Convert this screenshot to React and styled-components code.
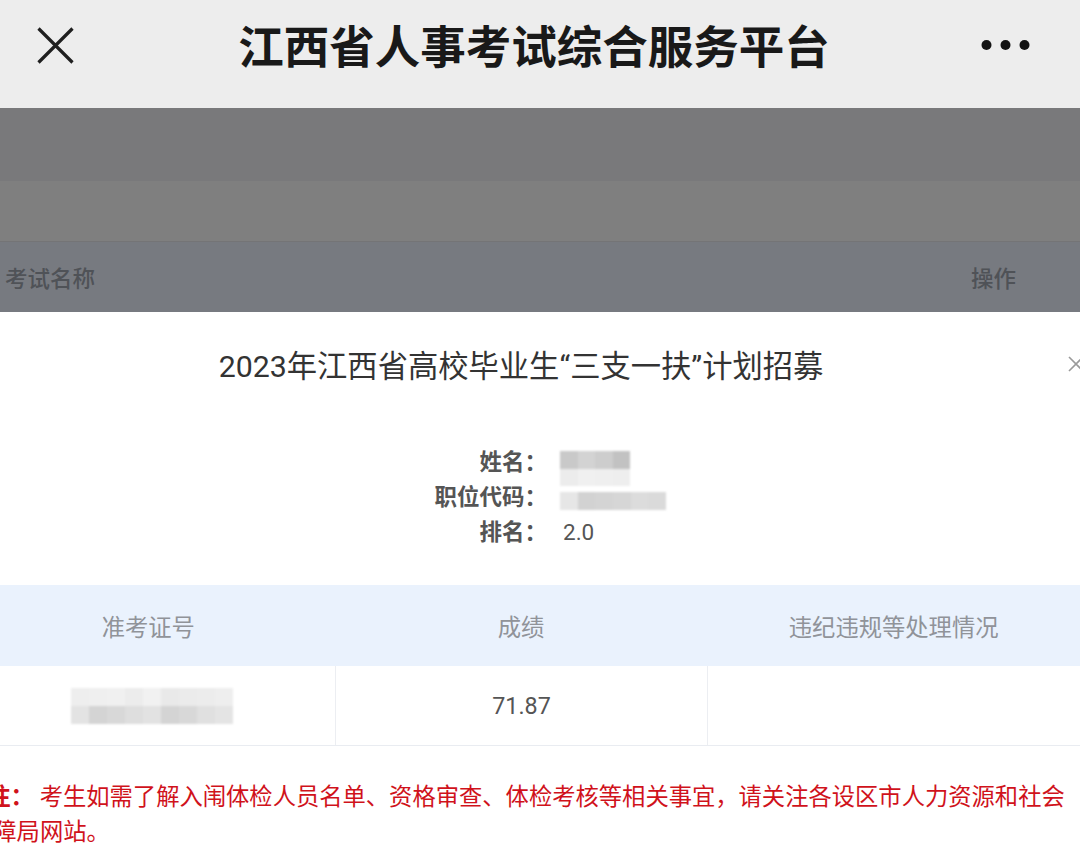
import React from "react";
import styled, { createGlobalStyle } from "styled-components";

const GlobalStyle = createGlobalStyle`
  html, body {
    margin: 0;
    padding: 0;
    width: 1080px;
    height: 859px;
    overflow: hidden;
    background: #ffffff;
  }
  body {
    font-family: Roboto, "Noto Sans CJK SC", sans-serif;
  }
  * { box-sizing: border-box; }
`;

const Page = styled.div`
  display: flex;
  flex-direction: column;
  width: 1080px;
  height: 859px;
`;

const NavBar = styled.header`
  height: 108px;
  flex: 0 0 108px;
  background: #ededed;
  display: grid;
  grid-template-columns: 108px 1fr 120px;
  align-items: center;
  padding-bottom: 18px;
`;

const NavLeft = styled.div`
  display: flex;
  align-items: center;
  padding-left: 37px;
`;

const NavTitle = styled.h1`
  margin: 0;
  text-align: center;
  font-size: 45.5px;
  line-height: 1;
  font-weight: 700;
  color: #191919;
  font-family: "Noto Sans CJK SC", sans-serif;
`;

const NavRight = styled.div`
  display: flex;
  align-items: center;
  padding-left: 21px;
`;

const Band = styled.div`
  flex: 0 0 ${(p) => p.$h}px;
  height: ${(p) => p.$h}px;
  background: ${(p) => p.$bg};
  border-bottom: ${(p) => (p.$line ? "1px solid #747476" : "none")};
`;

const DimHeader = styled.div`
  flex: 0 0 70px;
  height: 70px;
  background: #777a80;
  display: flex;
  align-items: center;
  justify-content: space-between;
  padding: 0 64px 0 5px;
  font-size: 22.5px;
  color: #4f5257;
  font-weight: 500;
`;

const Modal = styled.section`
  position: relative;
  flex: 1;
  margin-left: -38px;
  width: 1118px;
  background: #ffffff;
  padding-top: 33px;
`;

const ModalTitle = styled.h2`
  margin: 0;
  text-align: center;
  font-size: 30.3px;
  line-height: 44px;
  font-weight: 400;
  color: #333333;
`;

const ModalClose = styled.button`
  position: absolute;
  top: 44px;
  right: -4px;
  width: 16px;
  height: 16px;
  padding: 0;
  border: none;
  background: none;
  display: flex;
`;

const InfoGrid = styled.dl`
  margin: 56px 0 0 0;
  display: grid;
  grid-template-columns: 585px 1fr;
  column-gap: 16px;
  font-size: 22.5px;
  line-height: 35px;
`;

const Label = styled.dt`
  margin: 0;
  text-align: right;
  font-weight: 700;
  color: #555555;
`;

const Value = styled.dd`
  margin: 0;
  height: 35px;
  display: flex;
  align-items: center;
  color: #555555;
`;

const Mosaic = styled.div`
  display: grid;
  grid-template-columns: repeat(${(p) => p.$cols}, ${(p) => p.$tile}px);
  grid-auto-rows: ${(p) => p.$tile}px;
  filter: blur(1.2px);
  margin-left: ${(p) => p.$offset || 0}px;
  margin-top: ${(p) => p.$top || 0}px;
`;

const Tile = styled.span`
  display: block;
  background: ${(p) => p.$c};
`;

const Table = styled.div`
  margin-top: 35px;
  width: 100%;
`;

const HeadRow = styled.div`
  display: grid;
  grid-template-columns: repeat(3, 1fr);
  height: 81px;
  background: #eaf2fd;
`;

const HeadCell = styled.div`
  display: flex;
  align-items: center;
  justify-content: center;
  font-size: 23.3px;
  color: #909399;
`;

const DataRow = styled.div`
  display: grid;
  grid-template-columns: repeat(3, 1fr);
  height: 80px;
  border-bottom: 1px solid #e9ecf1;
`;

const DataCell = styled.div`
  display: flex;
  align-items: center;
  justify-content: center;
  font-size: 23.3px;
  color: #555555;
  border-left: ${(p) => (p.$first ? "none" : "1px solid #eceef2")};
`;

const Note = styled.p`
  margin: 34px 0 0 8px;
  width: 1105px;
  font-size: 23.3px;
  line-height: 35px;
  color: #d0121b;
  text-indent: -6px;
`;

const NoteStrong = styled.strong`
  font-weight: 700;
`;

const CloseIcon = () => (
  <svg width="37" height="37" viewBox="0 0 37 37">
    <path d="M1.5 1.5 L35.5 35.5 M35.5 1.5 L1.5 35.5" stroke="#1f1f1f" strokeWidth="3.2" strokeLinecap="butt" fill="none" />
  </svg>
);

const MoreIcon = () => (
  <svg width="50" height="12" viewBox="0 0 50 12">
    <circle cx="5.5" cy="6" r="5" fill="#141414" />
    <circle cx="24.5" cy="6" r="5" fill="#141414" />
    <circle cx="43.5" cy="6" r="5" fill="#141414" />
  </svg>
);

const SmallX = () => (
  <svg width="16" height="16" viewBox="0 0 16 16">
    <path d="M1 1 L15 15 M15 1 L1 15" stroke="#9a9a9a" strokeWidth="1.6" fill="none" />
  </svg>
);

const nameTiles = [
  "#c9c9c9", "#d3d3d3", "#cdcdcd", "#c2c2c2",
  "#ececec", "#f0f0f0", "#efefef", "#eeeeee",
];
const codeTiles = [
  "#e6e6e6", "#d2d2d2", "#d4d4d4", "#d6d6d6", "#dcdcdc", "#dadada",
];
const ticketTiles = [
  "#eeeeee", "#efefef", "#f0f0f0", "#ececec", "#f1f1f1", "#e9e9e9", "#ebebeb", "#ececec", "#eeeeee",
  "#e3e3e3", "#d4d4d4", "#d8d8d8", "#dedede", "#e2e2e2", "#d4d4d4", "#d8d8d8", "#e0e0e0", "#e4e4e4",
];

export default function App() {
  return (
    <>
      <GlobalStyle />
      <Page>
        <NavBar>
          <NavLeft>
            <CloseIcon />
          </NavLeft>
          <NavTitle>江西省人事考试综合服务平台</NavTitle>
          <NavRight>
            <MoreIcon />
          </NavRight>
        </NavBar>
        <Band $h={73} $bg="#79797b" />
        <Band $h={61} $bg="#7f7f7f" $line />
        <DimHeader>
          <span>考试名称</span>
          <span>操作</span>
        </DimHeader>
        <Modal>
          <ModalClose aria-label="关闭">
            <SmallX />
          </ModalClose>
          <ModalTitle>2023年江西省高校毕业生“三支一扶”计划招募</ModalTitle>
          <InfoGrid>
            <Label>姓名：</Label>
            <Value>
              <Mosaic $cols={4} $tile={17.5} $offset={-3} $top={12}>
                {nameTiles.map((c, i) => (
                  <Tile key={i} $c={c} />
                ))}
              </Mosaic>
            </Value>
            <Label>职位代码：</Label>
            <Value>
              <Mosaic $cols={6} $tile={17.7} $offset={-3} $top={7}>
                {codeTiles.map((c, i) => (
                  <Tile key={i} $c={c} />
                ))}
              </Mosaic>
            </Value>
            <Label>排名：</Label>
            <Value>2.0</Value>
          </InfoGrid>
          <Table>
            <HeadRow>
              <HeadCell>准考证号</HeadCell>
              <HeadCell>成绩</HeadCell>
              <HeadCell>违纪违规等处理情况</HeadCell>
            </HeadRow>
            <DataRow>
              <DataCell $first>
                <Mosaic $cols={9} $tile={18} $offset={8}>
                  {ticketTiles.map((c, i) => (
                    <Tile key={i} $c={c} />
                  ))}
                </Mosaic>
              </DataCell>
              <DataCell>71.87</DataCell>
              <DataCell />
            </DataRow>
          </Table>
          <Note>
            <NoteStrong>备注：</NoteStrong> 考生如需了解入闱体检人员名单、资格审查、体检考核等相关事宜，请关注各设区市人力资源和社会保障局网站。
          </Note>
        </Modal>
      </Page>
    </>
  );
}
